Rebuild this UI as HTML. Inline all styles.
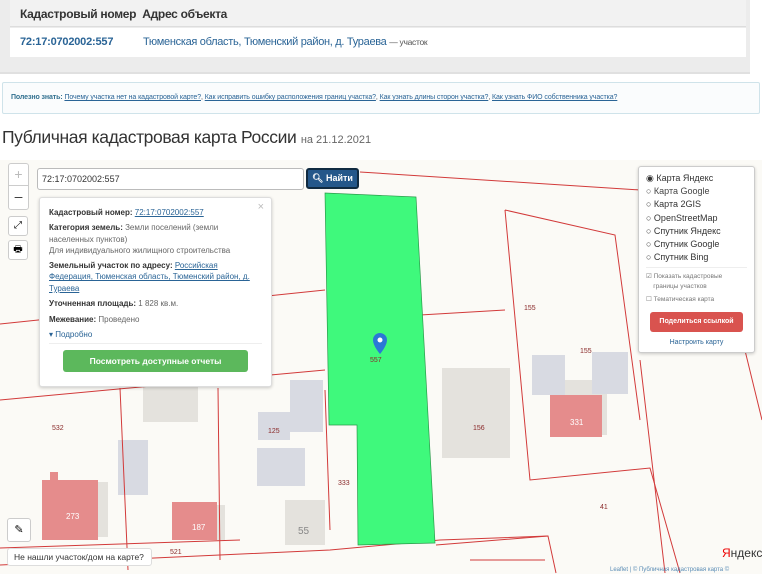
<!DOCTYPE html>
<html><head><meta charset="utf-8">
<style>
*{box-sizing:border-box;margin:0;padding:0}
body{width:767px;height:587px;overflow:hidden;background:#fff;font-family:"Liberation Sans",sans-serif;position:relative}
.a{position:absolute}
a{color:#2a6496}
</style></head><body>
<div class="a" style="left:0;top:0;width:750px;height:74px;background:#ececec;border-bottom:2px solid #e0e0e0"></div>
<div class="a" style="left:10px;top:0;width:736px;height:27px;background:#f2f2f2;border-bottom:1px solid #ddd"></div>
<div class="a" style="left:20px;top:7px;font-size:12px;font-weight:bold;color:#333;letter-spacing:-.3px">Кадастровый номер&nbsp; Адрес объекта</div>
<div class="a" style="left:10px;top:28px;width:736px;height:29px;background:#fff"></div>
<div class="a" style="left:20px;top:36px;font-size:11px;font-weight:bold;color:#2a6496;letter-spacing:-.2px">72:17:0702002:557</div>
<div class="a" style="left:143px;top:36px;font-size:11px;color:#2a6496;letter-spacing:-.3px">Тюменская область, Тюменский район, д. Тураева <span style="color:#555;font-size:8.5px">— участок</span></div>
<div class="a" style="left:2px;top:82px;width:758px;height:32px;border:1px solid #cfe3ea;background:#fafcfd;border-radius:2px"></div>
<div class="a" style="left:11px;top:94px;font-size:7px;color:#555;white-space:nowrap;letter-spacing:-.1px"><b style="color:#31708f">Полезно знать:</b> <a style="text-decoration:underline">Почему участка нет на кадастровой карте?</a>, <a style="text-decoration:underline">Как исправить ошибку расположения границ участка?</a>, <a style="text-decoration:underline">Как узнать длины сторон участка?</a>, <a style="text-decoration:underline">Как узнать ФИО собственника участка?</a></div>
<div class="a" style="left:2px;top:127px;font-size:17.5px;color:#333;letter-spacing:-.4px">Публичная кадастровая карта России <span style="font-size:11px;color:#666;letter-spacing:0">на 21.12.2021</span></div>

<svg class="a" style="left:0;top:160px" width="762" height="414" viewBox="0 160 762 414">
<rect x="0" y="160" width="762" height="414" fill="#fbfaf6"/>
<g fill="#e4e2dd"><rect x="143" y="385" width="55" height="37"/><rect x="442" y="368" width="68" height="90"/><rect x="285" y="500" width="40" height="45"/><rect x="95" y="482" width="13" height="55"/><rect x="175" y="505" width="50" height="35"/><rect x="555" y="380" width="52" height="55"/></g>
<g fill="#d8dae2"><rect x="118" y="440" width="30" height="55"/><rect x="257" y="448" width="48" height="38"/><rect x="290" y="380" width="33" height="52"/><rect x="258" y="412" width="32" height="28"/><rect x="532" y="355" width="33" height="40"/><rect x="592" y="352" width="36" height="42"/></g>
<g fill="#e58c8c"><rect x="42" y="480" width="56" height="60"/><rect x="50" y="472" width="8" height="10"/><rect x="172" y="502" width="45" height="38"/><rect x="550" y="395" width="52" height="42"/></g>
<g stroke="#d23a3a" stroke-width="1" fill="none">
<path d="M0 400 L325 370 M0 324 L325 290"/>
<path d="M120 388 L128 570 M218 388 L220 560 M325 390 L330 530"/>
<path d="M0 565 L330 550 L440 540 L548 536"/>
<path d="M420 315 L505 310 M505 210 L615 235 L640 420 M505 210 L530 480 L650 468 L680 573"/>
<path d="M640 360 L665 573 M740 330 L762 420"/>
<path d="M360 172 L640 190"/>
<path d="M436 545 L548 536 L556 573"/>
<path d="M0 548 L240 540 M470 560 L545 560"/>
</g>
<path d="M325 193 L416 197 L435 543 L358 545 L357 425 L329 425 Z" fill="#3ff97c" stroke="#2a9a4a" stroke-width=".7"/>
<g font-family="Liberation Sans" font-size="7" fill="#8a2a2a"><text x="52" y="430">532</text><text x="268" y="433">125</text><text x="338" y="485">333</text><text x="473" y="430">156</text><text x="524" y="310">155</text><text x="580" y="353">155</text><text x="600" y="509">41</text><text x="170" y="554">521</text><text x="370" y="362">557</text></g>
<g font-family="Liberation Sans" font-size="8" fill="#fff"><text x="66" y="519">273</text><text x="192" y="530">187</text><text x="570" y="425">331</text></g>
<text x="298" y="534" font-family="Liberation Sans" font-size="10" fill="#888">55</text>
<path d="M380 333 a7 7 0 0 1 7 7 c0 6 -7 14 -7 14 c0 0 -7 -8 -7 -14 a7 7 0 0 1 7 -7z" fill="#2b78d6"/><circle cx="380" cy="340" r="2.5" fill="#fff"/>
<text x="722" y="557" font-family="Liberation Sans" font-size="12" fill="#333"><tspan fill="#e00">Я</tspan>ндекс</text>
<text x="610" y="571" font-family="Liberation Sans" font-size="6" fill="#5b8db6">Leaflet | © Публичная кадастровая карта ©</text>
</svg>

<div class="a" style="left:8px;top:163px;width:21px;height:47px;background:#fff;border:1px solid #ccc;border-radius:3px;font-size:14px;text-align:center;line-height:21px;color:#bbb">+<div style="border-top:1px solid #ccc;color:#333">–</div></div>
<div class="a" style="left:8px;top:216px;width:20px;height:20px;background:#fff;border:1px solid #ccc;border-radius:3px;font-size:10px;text-align:center;line-height:18px">⤢</div>
<div class="a" style="left:8px;top:240px;width:20px;height:20px;background:#fff;border:1px solid #ccc;border-radius:3px;font-size:10px;text-align:center;line-height:18px">🖶</div>
<div class="a" style="left:37px;top:168px;width:267px;height:22px;background:#fff;border:1px solid #bbb;border-radius:3px;font-size:9px;padding:5px 4px;color:#333">72:17:0702002:557</div>
<div class="a" style="left:306px;top:168px;width:53px;height:21px;background:#24578a;border:2px solid #102a40;border-radius:3px;font-size:9px;color:#fff;font-weight:bold;text-align:center;line-height:17px">🔍︎ Найти</div>

<div class="a" style="left:39px;top:197px;width:233px;height:190px;background:#fff;border:1px solid #ddd;border-radius:3px;box-shadow:0 1px 3px rgba(0,0,0,.2);font-size:8px;color:#666;padding:9px 9px;line-height:11.3px">
<div style="position:absolute;right:7px;top:4px;color:#bbb;font-size:11px">×</div>
<div style="margin-bottom:4px"><b style="color:#333">Кадастровый номер:</b> <a style="text-decoration:underline">72:17:0702002:557</a></div>
<div style="margin-bottom:4px"><b style="color:#333">Категория земель:</b> Земли поселений (земли населенных пунктов)<br>Для индивидуального жилищного строительства</div>
<div style="margin-bottom:4px"><b style="color:#333">Земельный участок по адресу:</b> <a style="text-decoration:underline">Российская Федерация, Тюменская область, Тюменский район, д. Тураева</a></div>
<div style="margin-bottom:5px"><b style="color:#333">Уточненная площадь:</b> 1 828 кв.м.</div>
<div style="margin-bottom:3px"><b style="color:#333">Межевание:</b> Проведено</div>
<div style="color:#2a6496;border-bottom:1px solid #eee;padding-bottom:3px">▾ Подробно</div>
<div style="margin:6px 14px 0;height:22px;background:#5cb85c;border-radius:3px;color:#fff;font-weight:bold;font-size:8.5px;text-align:center;line-height:22px">Посмотреть доступные отчеты</div>
</div>

<div class="a" style="left:638px;top:166px;width:117px;height:187px;background:#fff;border:1px solid #ccc;border-radius:3px;box-shadow:0 1px 3px rgba(0,0,0,.2);font-size:9px;color:#333;padding:5px 7px;line-height:13.2px">
<div>◉ Карта Яндекс</div><div style="color:#444">○ Карта Google</div><div>○ Карта 2GIS</div><div>○ OpenStreetMap</div><div>○ Спутник Яндекс</div><div>○ Спутник Google</div><div>○ Спутник Bing</div>
<div style="border-top:1px solid #eee;margin-top:3px;padding-top:4px;font-size:6.5px;color:#777;line-height:10px">☑ Показать кадастровые<br>&nbsp;&nbsp;&nbsp;&nbsp;границы участков<br><div style="margin-top:3px">☐ Тематическая карта</div></div>
<div style="margin:7px 4px 0;height:20px;background:#d9534f;border-radius:3px;color:#fff;font-weight:bold;font-size:7px;text-align:center;line-height:20px">Поделиться ссылкой</div>
<div style="text-align:center;color:#2a6496;font-size:7px;margin-top:4px">Настроить карту</div>
</div>

<div class="a" style="left:7px;top:518px;width:24px;height:24px;background:#fff;border:1px solid #ccc;border-radius:3px;font-size:11px;text-align:center;line-height:22px">✎</div>
<div class="a" style="left:7px;top:548px;width:145px;height:18px;background:#fff;border:1px solid #ddd;border-radius:3px;font-size:8.5px;line-height:16px;padding-left:6px;color:#333">Не нашли участок/дом на карте?</div>
</body></html>
